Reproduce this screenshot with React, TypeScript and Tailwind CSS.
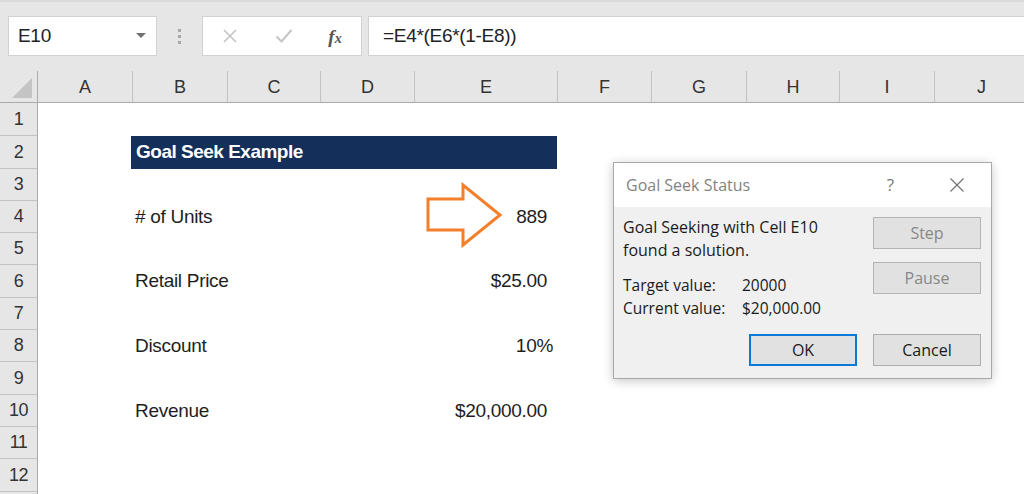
import React from "react";

type Col = { label: string; w: string };

const COLS: Col[] = [
  { label: "A", w: "w-[95px]" },
  { label: "B", w: "w-[95px]" },
  { label: "C", w: "w-[93px]" },
  { label: "D", w: "w-[94px]" },
  { label: "E", w: "w-[143px]" },
  { label: "F", w: "w-[94px]" },
  { label: "G", w: "w-[95px]" },
  { label: "H", w: "w-[93px]" },
  { label: "I", w: "w-[95px]" },
  { label: "J", w: "w-[94px]" },
];

const ROW_HEIGHTS: Record<number, string> = {
  1: "h-[33px]",
  2: "h-[33px]",
  3: "h-[32px]",
  4: "h-[32px]",
  5: "h-[32px]",
  6: "h-[33px]",
  7: "h-[32px]",
  8: "h-[32px]",
  9: "h-[33px]",
  10: "h-[32px]",
  11: "h-[32px]",
  12: "h-[33px]",
  13: "h-[32px]",
};

// label / value / right padding for the value
const CELLS: Record<number, { label: string; value: string; pad: string }> = {
  4: { label: "# of Units", value: "889", pad: "pr-[10px]" },
  6: { label: "Retail Price", value: "$25.00", pad: "pr-[10px]" },
  8: { label: "Discount", value: "10%", pad: "pr-[4px]" },
  10: { label: "Revenue", value: "$20,000.00", pad: "pr-[10px]" },
};

function FormulaBar() {
  return (
    <div className="h-[71px] bg-[#e6e6e6] border-t-2 border-[#dadada]">
      <div className="flex h-[40px] mt-[14px] items-stretch">
        {/* name box */}
        <div className="ml-[8px] w-[149px] bg-white border border-[#d2d2d2] flex items-center justify-between pl-[9px] pr-[10px]">
          <span className="text-[19px] tracking-[-0.3px] text-[#222]">E10</span>
          <svg width="10" height="6" viewBox="0 0 10 6">
            <polygon points="0,0 10,0 5,5" fill="#707070" />
          </svg>
        </div>
        {/* grip dots */}
        <div className="w-[45px] flex flex-col items-center justify-center gap-[3px]">
          <span className="w-[3px] h-[3px] bg-[#a8a8a8]" />
          <span className="w-[3px] h-[3px] bg-[#a8a8a8]" />
          <span className="w-[3px] h-[3px] bg-[#a8a8a8]" />
        </div>
        {/* cancel / enter / fx */}
        <div className="w-[160px] bg-white border border-[#d2d2d2] flex items-center">
          <div className="w-[54px] flex justify-center">
            <svg width="16" height="16" viewBox="0 0 16 16">
              <path d="M2 2 L14 14 M14 2 L2 14" stroke="#c4c4c4" strokeWidth="1.6" fill="none" />
            </svg>
          </div>
          <div className="w-[54px] flex justify-center">
            <svg width="18" height="16" viewBox="0 0 18 16">
              <path d="M1.5 8.5 L6.5 13.5 L16.5 2" stroke="#c4c4c4" strokeWidth="2" fill="none" />
            </svg>
          </div>
          <div className="flex-1 flex justify-center pr-[2px]">
            <span className="font-['Liberation_Serif',serif] italic font-bold text-[19px] text-[#555] leading-none">
              f<span className="text-[14px]">x</span>
            </span>
          </div>
        </div>
        {/* formula input */}
        <div className="ml-[6px] flex-1 bg-white border border-[#d2d2d2] border-r-0 flex items-center pl-[14px]">
          <span className="text-[19px] tracking-[-0.3px] text-[#222]">=E4*(E6*(1-E8))</span>
        </div>
      </div>
    </div>
  );
}

function ColumnHeaders() {
  return (
    <div className="flex h-[32px] bg-[#e6e6e6] border-b border-[#ababab]">
      <div className="w-[38px] shrink-0 border-r border-[#ababab] flex items-end justify-end pr-[5px] pb-[4px]">
        <svg width="20" height="20" viewBox="0 0 20 20">
          <polygon points="20,0 20,20 0,20" fill="#c4c4c4" />
        </svg>
      </div>
      {COLS.map((c) => (
        <div
          key={c.label}
          className={`${c.w} shrink-0 border-r border-[#c2c2c2] flex items-center justify-center text-[18px] text-[#333] pt-[2px]`}
        >
          {c.label}
        </div>
      ))}
    </div>
  );
}

function SheetRow({ n }: { n: number }) {
  const cell = CELLS[n];
  // row 13 is only a sliver at the bottom edge, so its number is not shown
  const label = n < 13 ? n : "";
  return (
    <div className={`flex ${ROW_HEIGHTS[n]}`}>
      <div className="w-[38px] shrink-0 bg-[#e6e6e6] border-r border-b border-r-[#ababab] border-b-[#c2c2c2] flex items-center justify-center text-[18px] text-[#333] tracking-[-0.5px]">
        {label}
      </div>
      <div className="w-[93px] shrink-0" />
      {n === 2 ? (
        <div className="w-[426px] h-full bg-[#142f59] flex items-center pl-[5px]">
          <span className="text-[19px] font-bold tracking-[-0.5px] text-white">Goal Seek Example</span>
        </div>
      ) : cell ? (
        <div className="w-[426px] flex items-center justify-between pl-[4px] text-[19px] tracking-[-0.3px] text-[#1e1e1e]">
          <span>{cell.label}</span>
          <span className={cell.pad}>{cell.value}</span>
        </div>
      ) : null}
    </div>
  );
}

function GoalSeekDialog() {
  return (
    <div className="absolute left-[613px] top-[162px] w-[379px] h-[217px] border border-[#a9a9a9] bg-[#f0f0f0] shadow-[0_2px_10px_rgba(0,0,0,0.22)] font-['Open_Sans',sans-serif] flex flex-col">
      <div className="h-[44px] bg-white flex items-center pl-[12px]">
        <span className="text-[16px] text-[#838383]">Goal Seek Status</span>
        <span className="ml-auto text-[17px] text-[#7a7a7a] mr-[55px]">?</span>
        <svg width="16" height="16" viewBox="0 0 16 16" className="mr-[26px]">
          <path d="M1.5 1.5 L14.5 14.5 M14.5 1.5 L1.5 14.5" stroke="#6e6e6e" strokeWidth="1.1" fill="none" />
        </svg>
      </div>
      <div className="flex-1 px-[9px] pt-[9px] text-[16px] text-[#1a1a1a]">
        <div className="flex">
          <div className="flex-1 leading-[23px]">
            <div>Goal Seeking with Cell E10</div>
            <div>found a solution.</div>
            <div className="mt-[12px] grid grid-cols-[119px_auto] text-[15.5px]">
              <span>Target value:</span>
              <span>20000</span>
              <span>Current value:</span>
              <span>$20,000.00</span>
            </div>
          </div>
          <div className="w-[108px] mr-[1px] pt-[1px] flex flex-col gap-[13px]">
            <div className="h-[32px] bg-[#e1e1e1] border border-[#b4b4b4] flex items-center justify-center text-[#888]">
              Step
            </div>
            <div className="h-[32px] bg-[#e1e1e1] border border-[#b4b4b4] flex items-center justify-center text-[#888]">
              Pause
            </div>
          </div>
        </div>
        <div className="mt-[14px] mr-[1px] flex justify-end gap-[16px]">
          <div className="w-[108px] h-[32px] bg-[#e1e1e1] border-2 border-[#0a78d6] flex items-center justify-center">
            OK
          </div>
          <div className="w-[108px] h-[32px] bg-[#e1e1e1] border border-[#adadad] flex items-center justify-center">
            Cancel
          </div>
        </div>
      </div>
    </div>
  );
}

export default function App() {
  const rows = Array.from({ length: 13 }, (_, i) => i + 1);
  return (
    <div className="relative w-[1024px] h-[494px] overflow-hidden bg-white font-['Liberation_Sans',Arial,sans-serif]">
      <FormulaBar />
      <ColumnHeaders />
      {rows.map((n) => (
        <SheetRow key={n} n={n} />
      ))}

      {/* orange arrow pointing at the changing cell */}
      <svg className="absolute left-[425px] top-[182px]" width="80" height="66" viewBox="0 0 80 66">
        <polygon
          points="3,17 38,17 38,3 75,33 38,63 38,48 3,48"
          fill="none"
          stroke="#f47f2a"
          strokeWidth="3"
          strokeLinejoin="miter"
        />
      </svg>

      <GoalSeekDialog />
    </div>
  );
}
